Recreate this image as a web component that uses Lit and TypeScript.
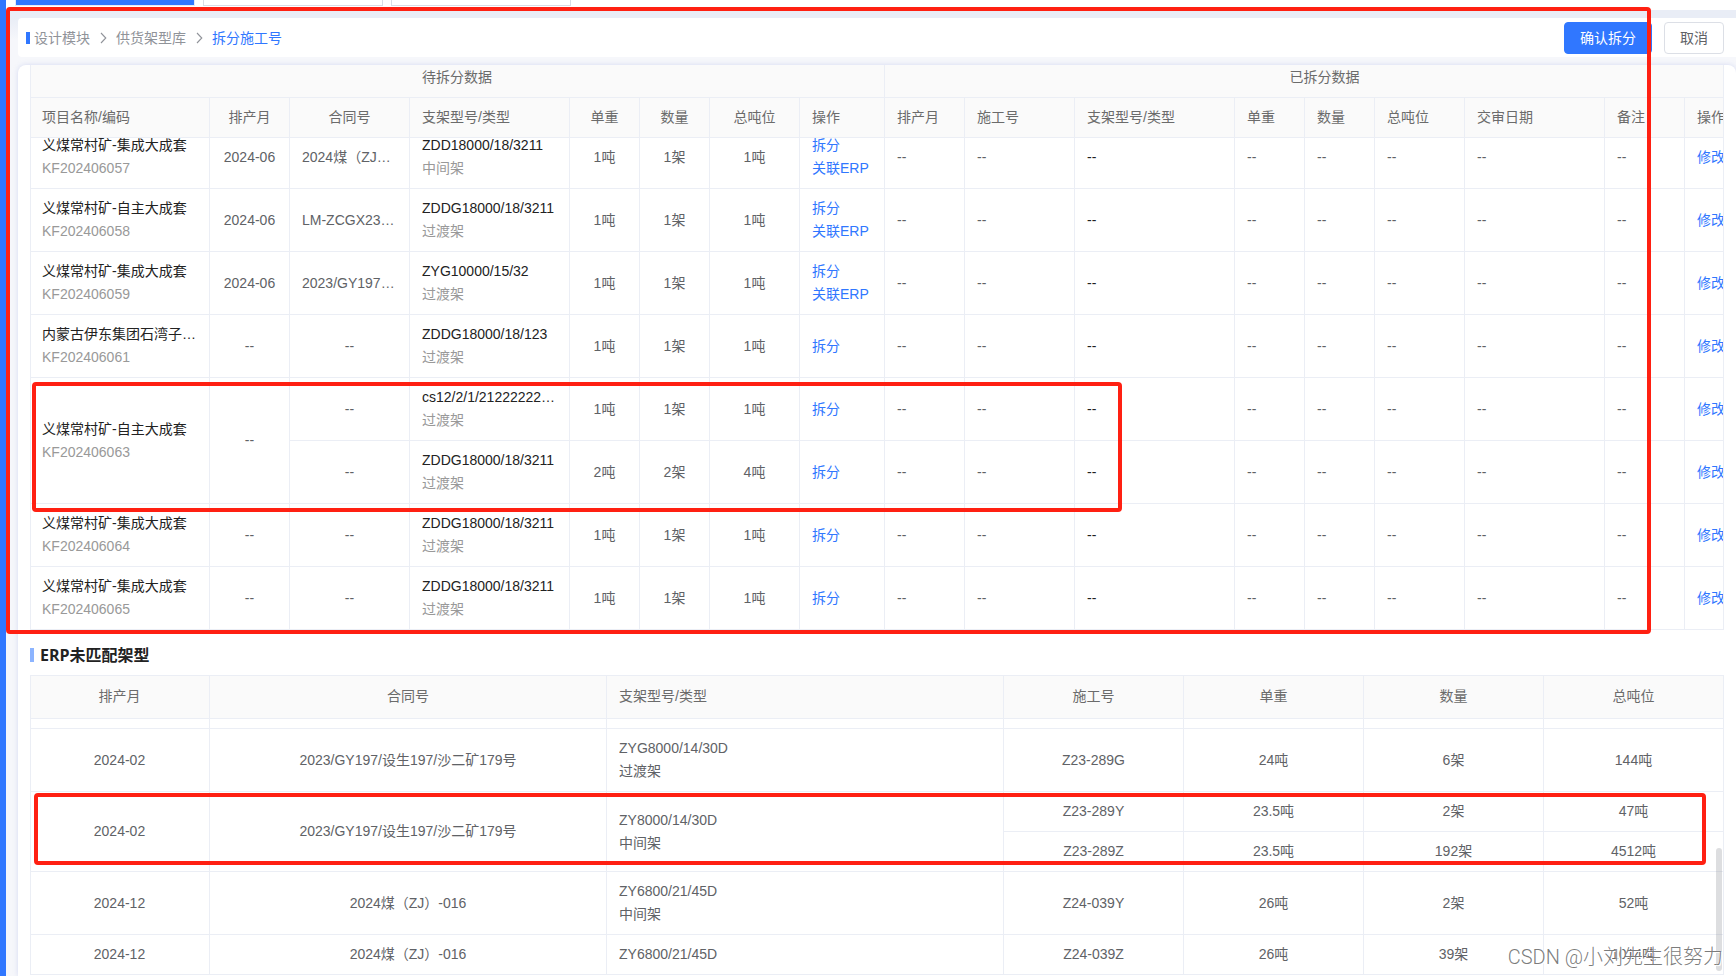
import { LitElement, html, css, svg, nothing } from "lit";
import { customElement } from "lit/decorators.js";
import { classMap } from "lit/directives/class-map.js";

interface SplitItem {
  contract: string;
  model: string;
  type: string;
  weight: string;
  count: string;
  total: string;
  erp?: boolean;
}

interface SplitGroup {
  name: string;
  code: string;
  month: string;
  items: SplitItem[];
}

interface ErpGroup {
  month: string;
  contract: string;
  model: string;
  type?: string;
  items: { no: string; weight: string; count: string; total: string }[];
}

const one = (contract: string, model: string, type: string, erp = false): SplitItem => ({
  contract, model, type, weight: "1吨", count: "1架", total: "1吨", erp,
});

const SPLIT: SplitGroup[] = [
  { name: "义煤常村矿-集成大成套", code: "KF202406057", month: "2024-06", items: [one("2024煤（ZJ）-016", "ZDD18000/18/3211", "中间架", true)] },
  { name: "义煤常村矿-自主大成套", code: "KF202406058", month: "2024-06", items: [one("LM-ZCGX23-179", "ZDDG18000/18/3211", "过渡架", true)] },
  { name: "义煤常村矿-集成大成套", code: "KF202406059", month: "2024-06", items: [one("2023/GY197/设生197", "ZYG10000/15/32", "过渡架", true)] },
  { name: "内蒙古伊东集团石湾子煤矿", code: "KF202406061", month: "--", items: [one("--", "ZDDG18000/18/123", "过渡架")] },
  {
    name: "义煤常村矿-自主大成套", code: "KF202406063", month: "--",
    items: [
      one("--", "cs12/2/1/2122222222222", "过渡架"),
      { contract: "--", model: "ZDDG18000/18/3211", type: "过渡架", weight: "2吨", count: "2架", total: "4吨" },
    ],
  },
  { name: "义煤常村矿-集成大成套", code: "KF202406064", month: "--", items: [one("--", "ZDDG18000/18/3211", "过渡架")] },
  { name: "义煤常村矿-集成大成套", code: "KF202406065", month: "--", items: [one("--", "ZDDG18000/18/3211", "过渡架")] },
];

const ERP: ErpGroup[] = [
  { month: "2024-02", contract: "2023/GY197/设生197/沙二矿179号", model: "ZYG8000/14/30D", type: "过渡架", items: [{ no: "Z23-289G", weight: "24吨", count: "6架", total: "144吨" }] },
  {
    month: "2024-02", contract: "2023/GY197/设生197/沙二矿179号", model: "ZY8000/14/30D", type: "中间架",
    items: [
      { no: "Z23-289Y", weight: "23.5吨", count: "2架", total: "47吨" },
      { no: "Z23-289Z", weight: "23.5吨", count: "192架", total: "4512吨" },
    ],
  },
  { month: "2024-12", contract: "2024煤（ZJ）-016", model: "ZY6800/21/45D", type: "中间架", items: [{ no: "Z24-039Y", weight: "26吨", count: "2架", total: "52吨" }] },
  { month: "2024-12", contract: "2024煤（ZJ）-016", model: "ZY6800/21/45D", items: [{ no: "Z24-039Z", weight: "26吨", count: "39架", total: "1014吨" }] },
];

const SPLIT_WIDTHS = [180, 80, 120, 160, 70, 70, 90, 85, 80, 110, 160, 70, 70, 90, 140, 80, 80];
const SPLIT_HEADS: [string, boolean][] = [
  ["项目名称/编码", false], ["排产月", true], ["合同号", true], ["支架型号/类型", false],
  ["单重", true], ["数量", true], ["总吨位", true], ["操作", false],
  ["排产月", false], ["施工号", false], ["支架型号/类型", false], ["单重", false],
  ["数量", false], ["总吨位", false], ["交审日期", false], ["备注", false], ["操作", false],
];
const ERP_HEADS: [string, boolean][] = [
  ["排产月", true], ["合同号", true], ["支架型号/类型", false], ["施工号", true],
  ["单重", true], ["数量", true], ["总吨位", true],
];

const tableStyles = css`
  :host { display: block; }
  table {
    border-collapse: separate;
    border-spacing: 0;
    table-layout: fixed;
  }
  th, td {
    box-sizing: border-box;
    padding: 8px 12px;
    border-right: 1px solid #ebeef5;
    border-bottom: 1px solid #ebeef5;
    font-size: 14px;
    font-weight: 400;
    line-height: 23px;
    text-align: left;
    vertical-align: middle;
    color: #606266;
    overflow: hidden;
    white-space: nowrap;
    text-overflow: ellipsis;
  }
  th { background: #fafafa; color: #6b6b6b; }
  .center { text-align: center; }
  .line { display: block; overflow: hidden; text-overflow: ellipsis; }
  .dark { color: #222; }
  .light { color: #999; }
  a { color: #3077ff; text-decoration: none; }
`;

@customElement("split-table")
export class SplitTable extends LitElement {
  static styles = [tableStyles, css`
    .frame {
      overflow: hidden;
      border-left: 1px solid #ebeef5;
      border-right: 1px solid #ebeef5;
    }
    table { width: 1735px; margin-left: -1px; }
    .head { margin-top: -7px; }
    .viewport { overflow: hidden; }
    .body { margin-top: -12px; }
  `];

  private cols() {
    return html`<colgroup>${SPLIT_WIDTHS.map((w) => html`<col style="width:${w}px" />`)}</colgroup>`;
  }

  render() {
    return html`
      <div class="frame">
        <table class="head">
          ${this.cols()}
          <thead>
            <tr>
              <th class="center" colspan="8">待拆分数据</th>
              <th class="center" colspan="9">已拆分数据</th>
            </tr>
            <tr>${SPLIT_HEADS.map(([t, c]) => html`<th class=${classMap({ center: c })}>${t}</th>`)}</tr>
          </thead>
        </table>
        <div class="viewport">
          <table class="body">
            ${this.cols()}
            <tbody>${SPLIT.map((g) => g.items.map((it, i) => this.row(g, it, i)))}</tbody>
          </table>
        </div>
      </div>
    `;
  }

  private row(g: SplitGroup, it: SplitItem, i: number) {
    const span = g.items.length;
    return html`<tr>
      ${i === 0
        ? html`<td rowspan=${span}><span class="line dark">${g.name}</span><span class="line light">${g.code}</span></td>
            <td class="center" rowspan=${span}>${g.month}</td>`
        : nothing}
      <td class="center">${it.contract}</td>
      <td><span class="line dark">${it.model}</span><span class="line light">${it.type}</span></td>
      <td class="center">${it.weight}</td>
      <td class="center">${it.count}</td>
      <td class="center">${it.total}</td>
      <td><a class="line" href="#split">拆分</a>${it.erp ? html`<a class="line" href="#erp">关联ERP</a>` : nothing}</td>
      <td>--</td><td>--</td><td class="dark">--</td><td>--</td><td>--</td><td>--</td><td>--</td><td>--</td>
      <td><a href="#edit">修改</a></td>
    </tr>`;
  }
}

@customElement("erp-table")
export class ErpTable extends LitElement {
  static styles = [tableStyles, css`
    .frame {
      position: relative;
      overflow: hidden;
      border-top: 1px solid #ebeef5;
      border-left: 1px solid #ebeef5;
    }
    table { width: calc(100% + 1px); margin-left: -1px; }
    th { padding: 9px 12px 10px; }
    .fixed { width: 180px; }
    .spacer { height: 10px; padding: 0; line-height: 0; }
    .thumb {
      position: absolute;
      right: 2px;
      bottom: 4px;
      width: 6px;
      height: 123px;
      border-radius: 3px;
      background: rgba(144, 147, 153, 0.3);
    }
  `];

  render() {
    return html`
      <div class="frame">
        <table>
          <colgroup>
            <col class="fixed" /><col /><col />
            <col class="fixed" /><col class="fixed" /><col class="fixed" /><col class="fixed" />
          </colgroup>
          <thead>
            <tr>${ERP_HEADS.map(([t, c]) => html`<th class=${classMap({ center: c })}>${t}</th>`)}</tr>
          </thead>
          <tbody>
            <tr>${ERP_HEADS.map(() => html`<td class="spacer"></td>`)}</tr>
            ${ERP.map((g) => g.items.map((it, i) => html`<tr>
              ${i === 0
                ? html`<td class="center" rowspan=${g.items.length}>${g.month}</td>
                    <td class="center" rowspan=${g.items.length}>${g.contract}</td>
                    <td rowspan=${g.items.length}>
                      <span class="line">${g.model}</span>${g.type ? html`<span class="line">${g.type}</span>` : nothing}
                    </td>`
                : nothing}
              <td class="center">${it.no}</td>
              <td class="center">${it.weight}</td>
              <td class="center">${it.count}</td>
              <td class="center">${it.total}</td>
            </tr>`))}
          </tbody>
        </table>
        <div class="thumb"></div>
      </div>
    `;
  }
}

@customElement("app-root")
export class AppRoot extends LitElement {
  static styles = css`
    :host {
      display: block;
      position: relative;
      min-height: 100vh;
      overflow: hidden;
      font-family: "Liberation Sans", "Noto Sans CJK SC", sans-serif;
      font-size: 14px;
      color: #606266;
      background: #fff;
    }
    .shell { display: flex; height: 100vh; overflow: hidden; }
    .rail { flex: none; width: 6px; background: #3077ff; }
    .main { flex: 1; min-width: 0; display: flex; flex-direction: column; }
    .tabs { display: flex; gap: 8px; height: 10px; padding-left: 9px; box-sizing: border-box; align-items: flex-start; }
    .tab {
      box-sizing: border-box;
      width: 180px;
      height: 6px;
      border: 1px solid #d8dce5;
      border-top: 0;
      background: #fff;
    }
    .tab.active { background: #3077ff; border-color: #e4e9f5; }
    .page {
      flex: 1;
      min-height: 0;
      display: flex;
      flex-direction: column;
      gap: 8px;
      padding: 8px 0 0 12px;
      background: linear-gradient(#e9edf6 0, #e9edf6 8px, #f6f7fb 30px);
    }
    .bar {
      display: flex;
      align-items: center;
      padding: 4px 12px 3px 8px;
      border-radius: 4px 0 0 4px;
      background: #fff;
    }
    .crumbs { display: flex; align-items: center; flex: 1; line-height: 20px; color: #909399; }
    .crumbs::before { content: ""; width: 4px; height: 12px; margin-right: 4px; background: #3077ff; }
    .crumbs a { color: inherit; text-decoration: none; }
    .crumbs .current { color: #3077ff; }
    .crumbs svg { width: 26px; height: 14px; }
    .actions { display: flex; gap: 12px; }
    button {
      height: 32px;
      padding: 0 15px 2px;
      border: 1px solid #dcdfe6;
      border-radius: 4px;
      background: #fff;
      color: #606266;
      font: inherit;
    }
    .primary { background: #3077ff; border-color: #3077ff; color: #fff; }
    .card {
      flex: 1;
      min-height: 0;
      overflow: hidden;
      padding: 0 12px;
      border-radius: 8px 8px 0 0;
      background: #fff;
      box-shadow: 0 0 5px rgba(200, 205, 238, 0.7);
    }
    h2 {
      display: flex;
      align-items: center;
      gap: 6px;
      margin: 14px 0 9px;
      font: 700 16px/22px "Open Sans", "Noto Sans CJK SC", sans-serif;
      color: #222;
    }
    h2::before { content: ""; width: 4px; height: 14px; background: #8cb4ff; }
    .mark {
      position: absolute;
      box-sizing: border-box;
      border: 4px solid #ff2012;
      border-radius: 4px;
      pointer-events: none;
    }
    .mark.outer { left: 6px; top: 7px; width: 1645px; height: 627px; }
    .mark.group { left: 32px; top: 382px; width: 1090px; height: 130px; }
    .mark.merged { left: 34px; top: 793px; width: 1672px; height: 72px; }
    .watermark {
      position: absolute;
      right: 13px;
      bottom: 5px;
      font: 300 20px/28px Roboto, "Noto Sans CJK SC", sans-serif;
      color: rgba(100, 100, 100, 0.85);
      text-shadow: 0 0 1px #fff, 1px 1px 0 #fff;
    }
  `;

  private chevron() {
    return html`<svg viewBox="0 0 26 14" aria-hidden="true">
      ${svg`<path d="M11 2 L15.8 7 L11 12" fill="none" stroke="#909399" stroke-width="1.1" />`}
    </svg>`;
  }

  render() {
    return html`
      <div class="shell">
        <div class="rail"></div>
        <div class="main">
          <div class="tabs">
            <div class="tab active"></div><div class="tab"></div><div class="tab"></div>
          </div>
          <div class="page">
            <div class="bar">
              <nav class="crumbs">
                <a href="#design">设计模块</a>${this.chevron()}
                <a href="#library">供货架型库</a>${this.chevron()}
                <a class="current" href="#split">拆分施工号</a>
              </nav>
              <div class="actions">
                <button class="primary" type="button">确认拆分</button>
                <button type="button">取消</button>
              </div>
            </div>
            <div class="card">
              <split-table></split-table>
              <h2>ERP未匹配架型</h2>
              <erp-table></erp-table>
            </div>
          </div>
        </div>
      </div>
      <div class="mark outer"></div>
      <div class="mark group"></div>
      <div class="mark merged"></div>
      <div class="watermark">CSDN @小刘先生很努力</div>
    `;
  }
}
